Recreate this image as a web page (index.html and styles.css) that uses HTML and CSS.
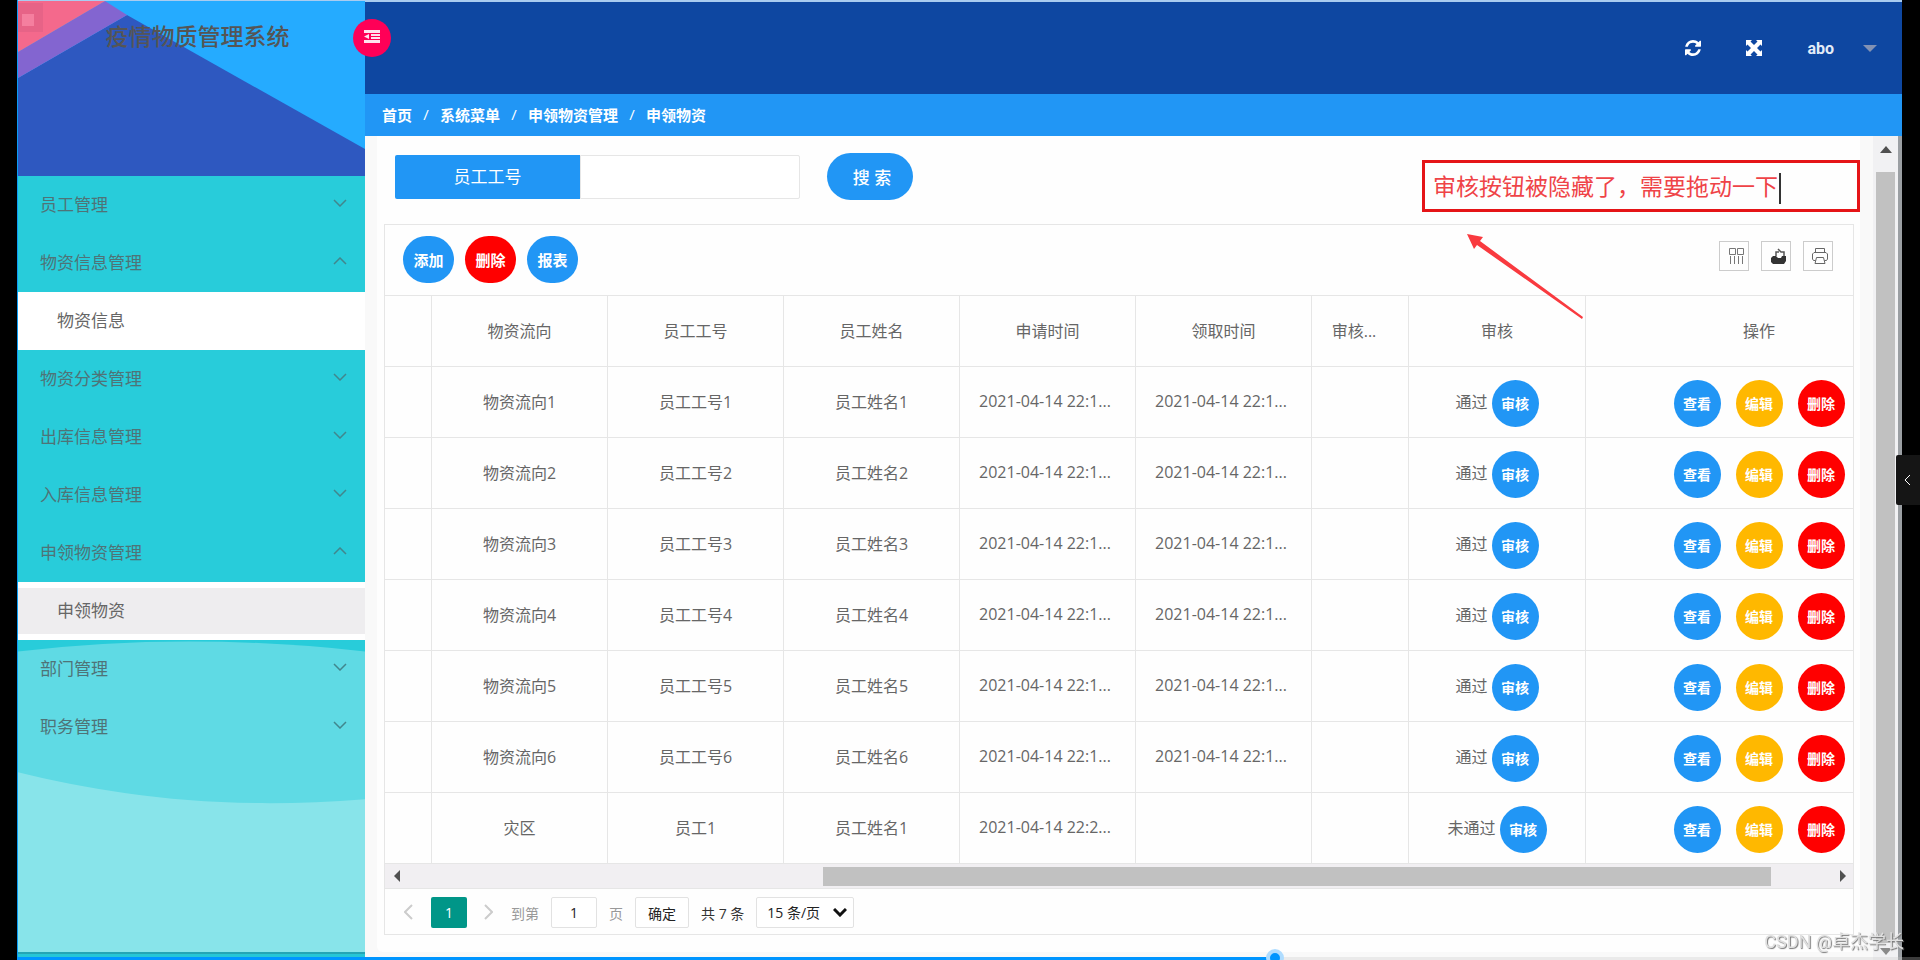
FILE: index.html
```html
<!DOCTYPE html>
<html lang="zh-CN">

<head>
    <title>疫情物质管理系统</title>
    <meta charset="utf-8">
    <meta name="viewport" content="width=device-width, initial-scale=1.0">

    <link rel="stylesheet" href="styles.css">
</head>


<body>

    <div class="stage">

        <aside class="sidebar">
            <svg class="wave" viewBox="0 0 347 785" preserveAspectRatio="none" aria-hidden="true">
                <path fill="#5fdae4" d="M0 476Q168 456 347 476V785H0Z" />
                <path fill="#88e4ea" d="M0 597C90 619 200 636 347 624V777H0Z" />
                <path fill="#24a5b5" d="M0 777H347V779H0Z" />
                <path fill="#26c6d6" d="M0 779H347V785H0Z" />
            </svg>

            <div class="brand">
                <svg class="brand-bg" viewBox="0 0 347 175" preserveAspectRatio="none" aria-hidden="true">
                    <path fill="#25abff" d="M0 0H347V175H0Z" />
                    <path fill="#2e58c0" d="M0 77L109 14L347 148V175H0Z" />
                    <path fill="#8365d0" d="M0 51L87 0L109 14L0 77Z" />
                    <path fill="#f4698c" d="M0 0H87L0 51Z" />
                    <path fill="#e76387" d="M0 2H25V31H0Z" />
                    <path fill="#f57f9f" d="M4 13H16V25H4Z" />
                </svg>
                <h1>疫情物质管理系统</h1>
            </div>

            <nav class="menu">
                <a href="#">员工管理<svg class="pil" viewBox="0 0 14 8"><path d="M1 1l6 6 6-6" /></svg></a>
                <a href="#">物资信息管理<svg class="pil" viewBox="0 0 14 8"><path d="M1 7l6-6 6 6" /></svg></a>
                <a href="#" class="sub">物资信息</a>
                <a href="#">物资分类管理<svg class="pil" viewBox="0 0 14 8"><path d="M1 1l6 6 6-6" /></svg></a>
                <a href="#">出库信息管理<svg class="pil" viewBox="0 0 14 8"><path d="M1 1l6 6 6-6" /></svg></a>
                <a href="#">入库信息管理<svg class="pil" viewBox="0 0 14 8"><path d="M1 1l6 6 6-6" /></svg></a>
                <a href="#">申领物资管理<svg class="pil" viewBox="0 0 14 8"><path d="M1 7l6-6 6 6" /></svg></a>
                <a href="#" class="sub valgt">申领物资</a>
                <a href="#">部门管理<svg class="pil" viewBox="0 0 14 8"><path d="M1 1l6 6 6-6" /></svg></a>
                <a href="#">职务管理<svg class="pil" viewBox="0 0 14 8"><path d="M1 1l6 6 6-6" /></svg></a>
            </nav>

            <button class="toggle" aria-label="收起菜单">
                <svg width="18" height="14" viewBox="0 0 18 14" fill="#ffe3ee">
                    <path d="M1 0H17V3H1ZM8 4H17V6H8ZM8 7H17V9H8ZM1 10H17V13H1ZM6 4V9L1 6.500Z" />
                </svg>
            </button>
        </aside>


        <div class="main">
            <header class="topbar">
                <button aria-label="刷新">
                    <svg width="16" height="16" viewBox="0 0 1536 1536" fill="#fff">
                        <path d="M1511 928q0 5-1 7-64 268-268 434.500T764 1536q-146 0-282.500-55T238 1324l-129 129q-19 19-45 19t-45-19-19-45V960q0-26 19-45t45-19h448q26 0 45 19t19 45-19 45l-137 137q71 66 161 102t187 36q134 0 250-65t186-179q11-17 53-117 8-23 30-23h192q13 0 22.500 9.500t9.500 22.500zM1536 128v448q0 26-19 45t-45 19h-448q-26 0-45-19t-19-45 19-45l138-138Q969 256 768 256q-134 0-250 65T332 500q-11 17-53 117-8 23-30 23H50q-13 0-22.500-9.500T18 608v-7q65-268 270-434.500T768 0q146 0 284 55.500T1297 212l130-129q19-19 45-19t45 19 19 45z" />
                    </svg>
                </button>
                <button aria-label="全屏">
                    <svg width="16" height="16" viewBox="0 0 16 16">
                        <path fill="#fff" d="M0 0H6L4.500 1.500 8 5 11.500 1.500 10 0H16V6L14.500 4.500 11 8 14.500 11.500 16 10V16H10L11.500 14.500 8 11 4.500 14.500 6 16H0V10L1.500 11.500 5 8 1.500 4.500 0 6Z" />
                    </svg>
                </button>
                <a href="#" class="user">abo</a>
                <svg class="user-pil" width="14" height="7" viewBox="0 0 14 7"><path fill="#8292b4" d="M0 0H14L7 7Z" /></svg>
            </header>

            <nav class="crumb">
                <a href="#">首页</a><span>/</span><a href="#">系统菜单</a><span>/</span><a href="#">申领物资管理</a><span>/</span><a href="#">申领物资</a>
            </nav>

            <div class="page">
                <main class="panel">

                    <form class="search">
                        <label for="nummer">员工工号</label>
                        <input id="nummer" type="text">
                        <button type="button">搜 索</button>
                    </form>

                    <section class="card">
                        <div class="toolbar">
                            <button class="round blue">添加</button>
                            <button class="round red">删除</button>
                            <button class="round blue">报表</button>
                            <div class="tools">
                                <button aria-label="筛选列">
                                    <svg width="18" height="18" viewBox="0 0 18 18" fill="none" stroke="#777">
                                        <path d="M2.500 1.500H8.500V7.500H2.500ZM10.500 1.500H16.500V7.500H10.500ZM3.500 9V17M7.500 9V17M11.500 9V17M15.500 9V17" />
                                    </svg>
                                </button>
                                <button aria-label="导出">
                                    <svg width="18" height="18" viewBox="0 0 18 18">
                                        <path fill="#333" d="M2 11L4 9H7L9 11H12L13 9H17V14L15 17H4L2 15Z" />
                                        <path fill="none" stroke="#555" stroke-width="1.500" d="M7 9V5H10M9 2L12 5H15V9" />
                                    </svg>
                                </button>
                                <button aria-label="打印">
                                    <svg width="18" height="18" viewBox="0 0 18 18" fill="none" stroke="#666">
                                        <path d="M4.500 5.500V1.500H13.500V5.500M4.500 13.500H2.500L1.500 12V7L3 5.500H15L16.500 7V12L15.500 13.500H13.500M5.500 10.500H12.500L14 16.500H4Z" />
                                    </svg>
                                </button>
                            </div>
                        </div>

                        <table>
                            <thead>
                                <tr>
                                    <th class="col-tom"></th>
                                    <th class="col">物资流向</th>
                                    <th class="col">员工工号</th>
                                    <th class="col">员工姓名</th>
                                    <th class="col">申请时间</th>
                                    <th class="col">领取时间</th>
                                    <th class="col-smal">审核...</th>
                                    <th class="col-status">审核</th>
                                    <th class="handling">操作</th>
                                </tr>
                            </thead>
                            <tbody id="liste"></tbody>
                        </table>

                        <div class="hscroll">
                            <svg width="6" height="12" viewBox="0 0 6 12"><path fill="#505050" d="M6 0V12L0 6Z" /></svg>
                            <div class="hbane"><div class="hthumb"></div></div>
                            <svg width="6" height="12" viewBox="0 0 6 12"><path fill="#505050" d="M0 0V12L6 6Z" /></svg>
                        </div>

                        <div class="pager">
                            <button class="skift" aria-label="上一页"><svg width="9" height="16" viewBox="0 0 9 16"><path d="M8 1L1 8l7 7" /></svg></button>
                            <button class="aktiv">1</button>
                            <button class="skift" aria-label="下一页"><svg width="9" height="16" viewBox="0 0 9 16"><path d="M1 1l7 7-7 7" /></svg></button>
                            <label for="side">到第</label>
                            <input id="side" type="text" value="1">
                            <span class="svag">页</span>
                            <button class="ok">确定</button>
                            <span>共 7 条</span>
                            <div class="antal">
                                <select aria-label="每页条数">
                                    <option>15 条/页</option>
                                    <option>30 条/页</option>
                                </select>
                                <svg width="14" height="9" viewBox="0 0 14 9"><path d="M1 1l6 6 6-6" /></svg>
                            </div>
                        </div>
                    </section>

                    <div class="note">审核按钮被隐藏了，需要拖动一下</div>
                    <svg class="note-pil" width="120" height="88" viewBox="0 0 120 88" aria-hidden="true">
                        <path fill="#f93a3f" d="M1 1L17 4 14 8 117 84 116 86 11 12 8 16Z" />
                    </svg>
                </main>

                <div class="vscroll">
                    <svg width="12" height="7" viewBox="0 0 12 7"><path fill="#505050" d="M0 7H12L6 0Z" /></svg>
                    <div class="vthumb"></div>
                    <svg width="12" height="7" viewBox="0 0 12 7"><path fill="#8a8a8a" d="M0 0H12L6 7Z" /></svg>
                </div>
            </div>
        </div>

    </div>

    <button class="handle" aria-label="展开">
        <svg width="8" height="12" viewBox="0 0 8 12"><path d="M6 1L1 6l5 5" /></svg>
    </button>
    <div class="progress"><div class="spillet"></div></div>
    <div class="mark">CSDN @卓杰学长</div>

<script>
    const retter = [];

    for (let i = 1; i <= 6; i++) {
        retter.push({
            flow: "物资流向" + i,
            nummer: "员工工号" + i,
            navn: "员工姓名" + i,
            start: "2021-04-14 22:1...",
            slut: "2021-04-14 22:1...",
            status: "通过"
        });
    }
    retter.push({
        flow: "灾区",
        nummer: "员工1",
        navn: "员工姓名1",
        start: "2021-04-14 22:2...",
        slut: "",
        status: "未通过"
    });

    const dest = document.querySelector("#liste");

    retter.forEach(række => {
        dest.insertAdjacentHTML("beforeend",
            `<tr>
                <td></td>
                <td>${række.flow}</td>
                <td>${række.nummer}</td>
                <td>${række.navn}</td>
                <td class="tid">${række.start}</td>
                <td class="tid">${række.slut}</td>
                <td></td>
                <td><div class="status">${række.status}<button class="round blue">审核</button></div></td>
                <td class="handling"><div class="knapper">
                    <button class="round blue">查看</button>
                    <button class="round gul">编辑</button>
                    <button class="round red">删除</button>
                </div></td>
            </tr>`);
    });
</script>

</body>

</html>
```

FILE: styles.css
```css
*, *::after {
    box-sizing: border-box;
}

body {
    margin: 0;
    background-color: #000;
    font-family: "Open Sans", "Noto Sans CJK SC", sans-serif;
    font-size: 16px;
    color: #666;
}

button, input, select {
    font-family: inherit;
    margin: 0;
    padding: 0;
    border: none;
}

button {
    background: none;
    cursor: pointer;
}

a {
    text-decoration: none;
    color: inherit;
}

svg {
    display: block;
    flex: none;
}

.stage {
    display: flex;
    min-height: 100vh;
    margin: 0 18px 0 17px;
    border-left: 1px solid #0a9cf5;
}

/* venstre menu */

.sidebar {
    position: relative;
    flex: none;
    width: 347px;
    border-top: 1px solid #a9ccf0;
    background-color: #28ccda;
}

.wave {
    position: absolute;
    left: 0;
    top: 175px;
    width: 100%;
    height: calc(100% - 175px);
}

.brand {
    position: relative;
    height: 175px;
    padding-top: 17px;
}

.brand-bg {
    position: absolute;
    left: 0;
    top: 0;
    width: 100%;
    height: 100%;
}

h1 {
    position: relative;
    margin: 0 0 0 12px;
    text-align: center;
    font-size: 23px;
    line-height: 36px;
    font-weight: 500;
    color: #555;
}

.menu {
    position: relative;
}

.menu a {
    display: flex;
    align-items: center;
    justify-content: space-between;
    height: 58px;
    padding: 0 18px 4px 22px;
    font-size: 17px;
    color: #4f7377;
}

.menu a.sub {
    padding-left: 39px;
    background-color: #fff;
    color: #666;
}

.menu a.valgt {
    background-color: #eeedef;
    border-top: 6px solid #fff;
    border-bottom: 6px solid #fff;
}

.pil {
    width: 14px;
    height: 8px;
    fill: none;
    stroke: #41868d;
    stroke-width: 1.5;
}

.toggle {
    position: absolute;
    right: -26px;
    top: 18px;
    z-index: 2;
    display: flex;
    align-items: center;
    justify-content: center;
    width: 38px;
    height: 38px;
    padding-bottom: 2px;
    border-radius: 50%;
    background-color: #ff0057;
}

/* top */

.main {
    display: flex;
    flex-direction: column;
    flex: 1;
    min-width: 0;
}

.topbar {
    display: flex;
    align-items: center;
    justify-content: flex-end;
    gap: 45px;
    height: 94px;
    padding-right: 25px;
    border-top: 2px solid #a9ccf0;
    background-color: #0e47a1;
}

.user {
    font-family: "Roboto", sans-serif;
    font-size: 16px;
    font-weight: bold;
    color: #e3ecf8;
}

.user-pil {
    margin-left: -16px;
}

.crumb {
    display: flex;
    align-items: center;
    height: 42px;
    padding: 0 0 2px 17px;
    background-color: #2196f5;
    color: #fff;
    font-size: 15px;
    font-weight: bold;
}

.crumb span {
    width: 28px;
    text-align: center;
    font-weight: normal;
}

/* indhold */

.page {
    display: flex;
    flex: 1;
    padding-left: 12px;
    background-color: #f9f9f9;
}

.panel {
    position: relative;
    flex: 1;
    min-width: 0;
    margin: 0 13px 8px 0;
    padding: 17px 6px 16px 7px;
    border-radius: 0 0 6px 6px;
    background-color: #fefefe;
}

.search {
    display: flex;
    align-items: center;
    margin: 0 0 24px 11px;
}

.search label {
    width: 185px;
    line-height: 44px;
    text-align: center;
    background-color: #2196f5;
    color: #fff;
    font-size: 17px;
    border-radius: 2px 0 0 2px;
}

.search input {
    width: 220px;
    height: 44px;
    padding: 0 10px;
    border: 1px solid #e6e6e6;
    border-radius: 0 2px 2px 0;
    background-color: #fff;
}

.search button {
    width: 86px;
    height: 47px;
    margin-left: 27px;
    padding-left: 4px;
    border-radius: 24px;
    background-color: #2196f5;
    color: #fff;
    font-size: 17px;
    font-weight: 500;
}

.card {
    border: 1px solid #e6e6e6;
}

.toolbar {
    display: flex;
    align-items: center;
    gap: 11px;
    height: 71px;
    padding: 0 20px 2px 18px;
    border-bottom: 1px solid #e6e6e6;
}

.round {
    width: 47px;
    height: 47px;
    border-radius: 24px;
    color: #fff;
    font-size: 14px;
    font-weight: bold;
}

.toolbar .round {
    width: 51px;
    font-size: 15px;
}

.blue {
    background-color: #2196f5;
}

.red {
    background-color: #ff0000;
}

.gul {
    background-color: #ffb800;
}

.tools {
    display: flex;
    gap: 12px;
    margin-left: auto;
    padding-bottom: 6px;
}

.tools button {
    display: flex;
    align-items: center;
    justify-content: center;
    width: 30px;
    height: 30px;
    padding-left: 4px;
    border: 1px solid #ccc;
}

table {
    width: 100%;
    table-layout: fixed;
    border-spacing: 0;
}

th, td {
    height: 71px;
    padding: 0 0 2px;
    border-bottom: 1px solid #e6e6e6;
    border-left: 1px solid #e6e6e6;
    text-align: center;
    font-weight: normal;
    white-space: nowrap;
}

th:first-child, td:first-child {
    border-left: none;
}

.col-tom {
    width: 46px;
}

.col {
    width: 176px;
}

.col-smal {
    width: 97px;
    padding-right: 12px;
}

.col-status {
    width: 177px;
}

.tid {
    padding-right: 5px;
}

.handling {
    padding-left: 79px;
}

.status, .knapper {
    display: flex;
    align-items: center;
    justify-content: center;
    gap: 4px;
}

.status .round {
    margin-top: 4px;
}

.knapper {
    gap: 15px;
    padding-top: 4px;
}

.hscroll {
    display: flex;
    align-items: center;
    gap: 12px;
    height: 25px;
    padding: 0 7px 0 9px;
    border-bottom: 1px solid #e6e6e6;
    background-color: #f1eff2;
}

.hbane {
    flex: 1;
}

.hthumb {
    width: 67%;
    height: 19px;
    margin-left: 29%;
    background-color: #c1c1c1;
}

.pager {
    display: flex;
    align-items: center;
    gap: 12px;
    height: 45px;
    padding: 2px 0 0 19px;
    font-size: 14px;
    color: #333;
}

.skift {
    padding: 0 6px 2px 0;
}

.skift svg {
    fill: none;
    stroke: #ccc;
    stroke-width: 2;
}

.pager .aktiv {
    width: 36px;
    height: 31px;
    margin-right: 5px;
    border-radius: 2px;
    background-color: #009688;
    color: #fff;
    font-size: 14px;
}

.pager label, .svag {
    color: #999;
}

.pager input, .ok {
    width: 46px;
    height: 31px;
    border: 1px solid #e2e2e2;
    border-radius: 2px;
    background-color: #fff;
    text-align: center;
    font-size: 14px;
    color: #222;
}

.pager .ok {
    width: 54px;
}

.antal {
    position: relative;
}

.antal select {
    appearance: none;
    width: 98px;
    height: 31px;
    padding-left: 10px;
    border: 1px solid #e2e2e2;
    border-radius: 2px;
    background-color: #fff;
    font-size: 14px;
    color: #222;
}

.antal svg {
    position: absolute;
    right: 7px;
    top: 11px;
    fill: none;
    stroke: #111;
    stroke-width: 3;
    pointer-events: none;
}

.vscroll {
    display: flex;
    flex-direction: column;
    align-items: center;
    gap: 19px;
    width: 29px;
    padding: 10px 0 5px;
    border-right: 4px solid #9b9fa3;
    background-color: #f1f1f3;
}

.vthumb {
    flex: 1;
    width: 19px;
    margin-bottom: -14px;
    background-color: #c1c1c1;
}

/* rød note oven på siden */

.note {
    position: absolute;
    right: 0;
    top: 24px;
    width: 438px;
    padding-left: 8px;
    border: 3px solid #e51417;
    font-size: 23px;
    line-height: 46px;
    color: #ef4347;
}

.note::after {
    content: "";
    display: inline-block;
    width: 2px;
    height: 31px;
    margin-left: 1px;
    vertical-align: middle;
    background-color: #333;
}

.note-pil {
    position: absolute;
    right: 274px;
    top: 97px;
}

.handle {
    position: fixed;
    right: 0;
    top: 455px;
    display: flex;
    align-items: center;
    justify-content: center;
    width: 24px;
    height: 50px;
    border-radius: 2px 0 0 2px;
    background-color: #151515;
}

.handle svg {
    fill: none;
    stroke: #fff;
}

.progress {
    position: fixed;
    left: 17px;
    right: 0;
    bottom: 0;
    height: 3px;
    background-color: rgba(200, 200, 200, 0.3);
}

.spillet {
    position: relative;
    width: 66%;
    height: 3px;
    background-color: #0095ff;
}

.spillet::after {
    content: "";
    position: absolute;
    right: -11px;
    top: -8px;
    width: 18px;
    height: 18px;
    border: 4px solid #aedcff;
    border-radius: 50%;
    background-color: #0095ff;
}

.mark {
    position: fixed;
    right: 16px;
    bottom: 5px;
    font-family: "Roboto", "Noto Sans CJK SC", sans-serif;
    font-size: 18px;
    line-height: 26px;
    color: #e0e0e0;
    text-shadow: 1px 1px 1px #777;
}
```
